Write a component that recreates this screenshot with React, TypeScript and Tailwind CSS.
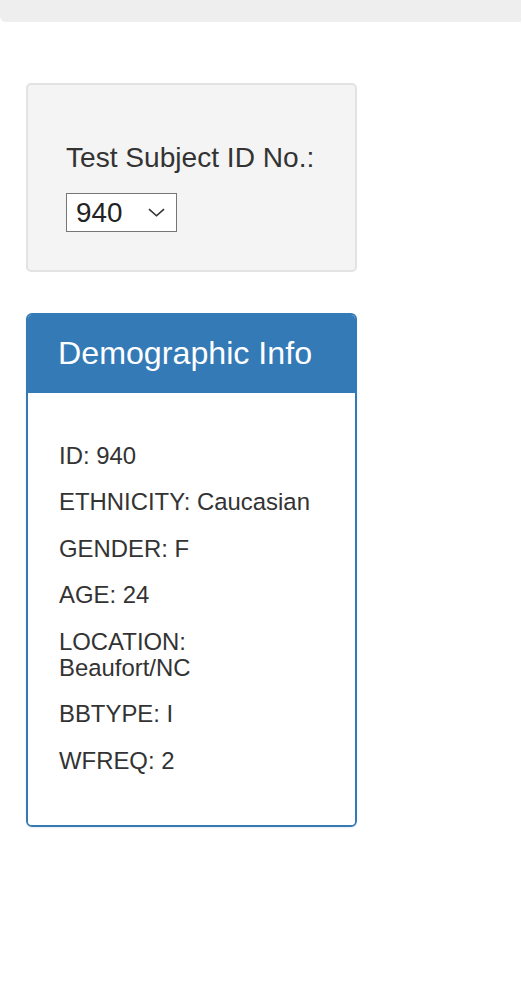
import React from "react";

const items = [
  ["ID: 940"],
  ["ETHNICITY: Caucasian"],
  ["GENDER: F"],
  ["AGE: 24"],
  ["LOCATION:", "Beaufort/NC"],
  ["BBTYPE: I"],
  ["WFREQ: 2"],
];

export default function App() {
  return (
    <div className="min-h-[992px] w-[522px] bg-white text-[#333333] font-['Liberation_Sans',Arial,sans-serif]">
      <div className="h-[22px] w-[521px] rounded-bl-[6px] bg-[#eeeeee]" />
      <div className="ml-[26px] mt-[61px] w-[331px] rounded-[5px] border-2 border-[#e3e3e3] bg-[#f4f4f4] pl-[38px] pt-[57px] pb-[38px]">
        <div className="text-[28.1px] leading-[32px]">Test Subject ID No.:</div>
        <div className="mt-[19px] flex h-[39px] w-[111px] items-center justify-between border border-[#767676] bg-white pl-[9px] pr-[11px]">
          <span className="text-[27.8px] leading-[32px] text-[#222]">940</span>
          <svg width="17" height="9" viewBox="0 0 17 9" fill="none">
            <path d="M1 1.2 L8.5 7.8 L16 1.2" stroke="#333" strokeWidth="1.6" />
          </svg>
        </div>
      </div>
      <div className="ml-[26px] mt-[41px] w-[331px] overflow-hidden rounded-[6px] border-2 border-[#337ab7] shadow-[0_1px_2px_rgba(0,0,0,0.08)]">
        <div className="flex h-[78px] items-center bg-[#337ab7] pl-[30px] pb-[3px] text-[32.2px] leading-[36px] text-white">
          Demographic Info
        </div>
        <div className="flex flex-col gap-[20px] bg-white pl-[31px] pt-[50px] pb-[51px] text-[23.9px] leading-[26.4px]">
          {items.map((lines, i) => (
            <div key={i}>
              {lines.map((l, j) => (
                <div key={j}>{l}</div>
              ))}
            </div>
          ))}
        </div>
      </div>
    </div>
  );
}
